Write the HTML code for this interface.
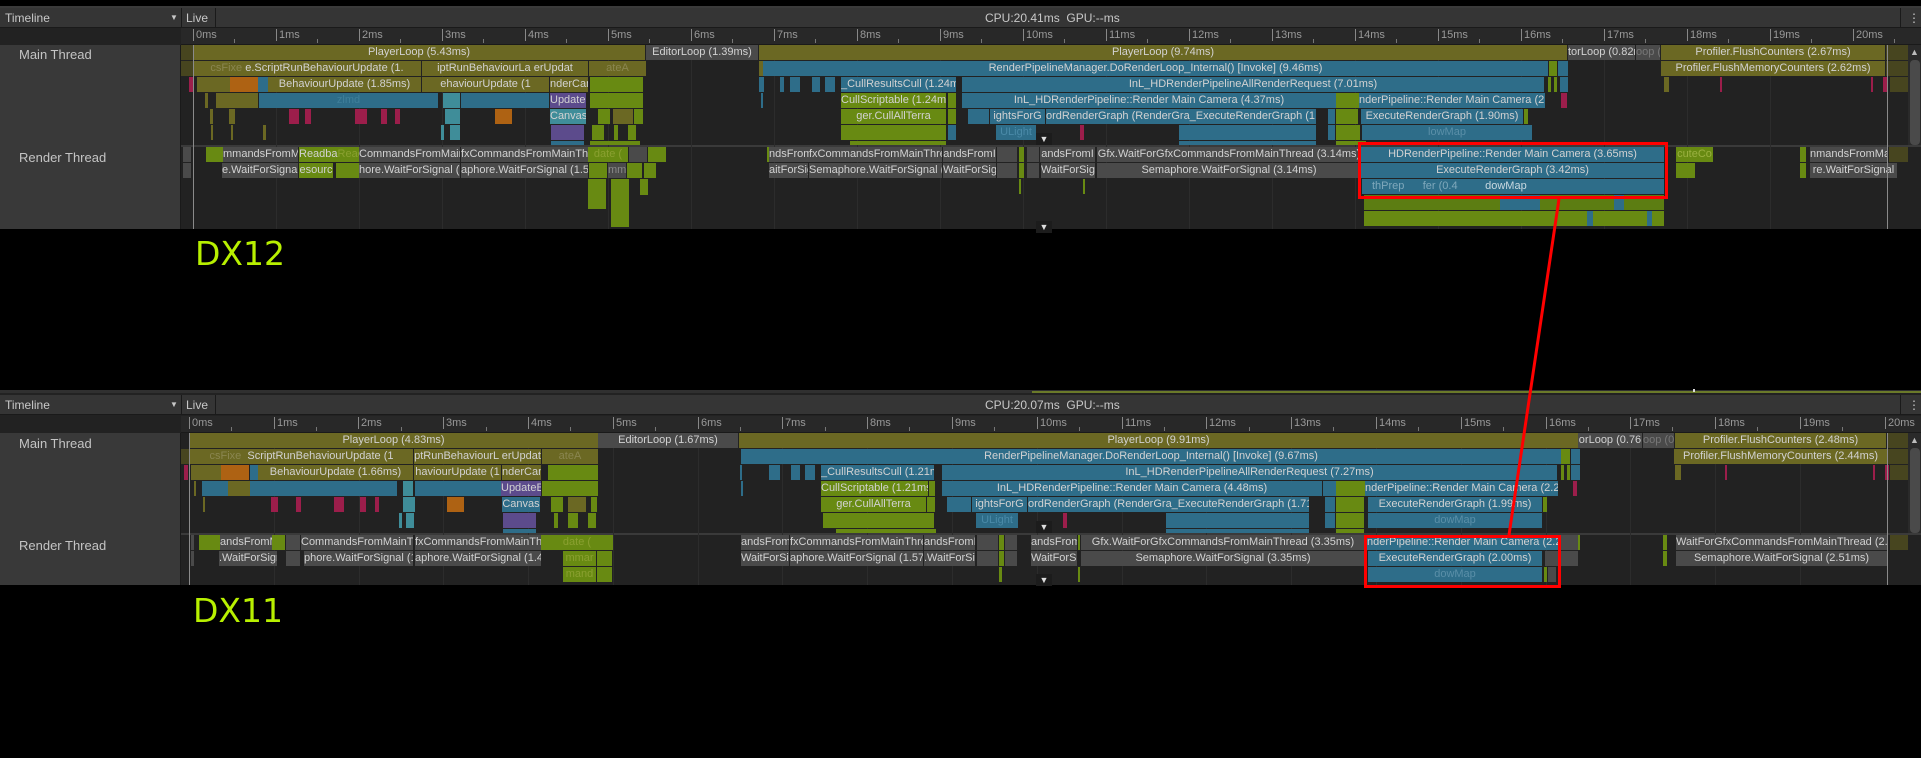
<!DOCTYPE html>
<html><head><meta charset="utf-8"><style>
*{margin:0;padding:0;box-sizing:border-box}
body{width:1921px;height:758px;background:#000;position:relative;overflow:hidden;font-family:"Liberation Sans",sans-serif}
.p{position:absolute;left:0;width:1921px;background:#222}
.tb{position:absolute;left:0;width:1921px;height:20px;background:#353535;border-bottom:1px solid #1a1a1a;color:#c8c8c8;font-size:12px;line-height:20px}
.lc{position:absolute;left:0;width:181px;background:#393939;border-right:1px solid #1a1a1a}
.ru{position:absolute;left:181px;right:0;height:17px;background:#282828;border-bottom:1px solid #1a1a1a}
.ru span{position:absolute;top:1px;font-size:11px;color:#999;border-left:1px solid #888;padding-left:2px;line-height:12px}
.ru em{position:absolute;top:11px;width:1px;height:4px;background:#777}
.lab{position:absolute;left:19px;font-size:13px;color:#c4c4c4}
.b{position:absolute;height:15px;overflow:hidden;white-space:nowrap;text-align:center;font-size:11px;line-height:15px;color:#d2d2d2;font-style:normal}
.o{background:#6b6823}.g{background:#4a4a4a}.bl{background:#2e6d89}.gr{background:#688a12}.or{background:#ae6213}.pu{background:#5c4b8c}.r{background:#9c1e4b}.d{background:#47451f}.t{background:#3f8d99}
.dm{color:#5a7f8f}
.gl{position:absolute;width:1px;background:#2c2c2c}
.sep{position:absolute;left:0;width:1921px;height:2px;background:#3a3a3a}
.fl{position:absolute;width:1px;background:#8a8a8a}
.dd{position:absolute;width:16px;height:12px;background:#1c1c1c;color:#ddd;font-size:9px;text-align:center;line-height:12px}
.dx{position:absolute;color:#b8f000;font-size:33px;font-family:"DejaVu Sans","Liberation Sans",sans-serif}
.sb{position:absolute;left:1908px;width:13px;background:#2a2a2a}
</style></head><body>

<!-- TOP PANEL -->
<div style="position:absolute;left:0;top:6px;width:1921px;height:2px;background:#3a3a3a"></div>
<div class="p" style="top:8px;height:221px"></div>
<div class="tb" style="top:8px"><span style="position:absolute;left:5px">Timeline</span><span style="position:absolute;left:170px;font-size:8px">▼</span><span style="position:absolute;left:181px;width:35px;height:20px;border-left:1px solid #1a1a1a;border-right:1px solid #1a1a1a;padding-left:4px">Live</span><span style="position:absolute;left:985px">CPU:20.41ms&nbsp;&nbsp;GPU:--ms</span><span style="position:absolute;left:1900px;border-left:1px solid #1a1a1a;padding-left:7px">⋮</span></div>
<div class="ru" style="top:28px">
<span style="left:12px">0ms</span><span style="left:95px">1ms</span><span style="left:178px">2ms</span><span style="left:261px">3ms</span><span style="left:344px">4ms</span><span style="left:427px">5ms</span><span style="left:510px">6ms</span><span style="left:593px">7ms</span><span style="left:676px">8ms</span><span style="left:759px">9ms</span><span style="left:842px">10ms</span><span style="left:925px">11ms</span><span style="left:1008px">12ms</span><span style="left:1091px">13ms</span><span style="left:1174px">14ms</span><span style="left:1257px">15ms</span><span style="left:1340px">16ms</span><span style="left:1423px">17ms</span><span style="left:1506px">18ms</span><span style="left:1589px">19ms</span><span style="left:1672px">20ms</span>
<em style="left:53px"></em><em style="left:136px"></em><em style="left:219px"></em><em style="left:302px"></em><em style="left:385px"></em><em style="left:468px"></em><em style="left:551px"></em><em style="left:634px"></em><em style="left:717px"></em><em style="left:800px"></em><em style="left:883px"></em><em style="left:966px"></em><em style="left:1049px"></em><em style="left:1132px"></em><em style="left:1215px"></em><em style="left:1298px"></em><em style="left:1381px"></em><em style="left:1464px"></em><em style="left:1547px"></em><em style="left:1630px"></em><em style="left:1713px"></em>
</div>
<div class="lc" style="top:45px;height:184px"></div>
<div class="lab" style="top:47px">Main Thread</div>
<div class="lab" style="top:150px">Render Thread</div>
<div class="sep" style="top:145px;left:181px;width:1740px"></div>
<!-- grid -->
<div class="gl" style="left:276px;top:45px;height:184px"></div><div class="gl" style="left:359px;top:45px;height:184px"></div><div class="gl" style="left:442px;top:45px;height:184px"></div><div class="gl" style="left:525px;top:45px;height:184px"></div><div class="gl" style="left:608px;top:45px;height:184px"></div><div class="gl" style="left:691px;top:45px;height:184px"></div><div class="gl" style="left:774px;top:45px;height:184px"></div><div class="gl" style="left:857px;top:45px;height:184px"></div><div class="gl" style="left:940px;top:45px;height:184px"></div><div class="gl" style="left:1023px;top:45px;height:184px"></div><div class="gl" style="left:1106px;top:45px;height:184px"></div><div class="gl" style="left:1189px;top:45px;height:184px"></div><div class="gl" style="left:1272px;top:45px;height:184px"></div><div class="gl" style="left:1355px;top:45px;height:184px"></div><div class="gl" style="left:1438px;top:45px;height:184px"></div><div class="gl" style="left:1521px;top:45px;height:184px"></div><div class="gl" style="left:1604px;top:45px;height:184px"></div><div class="gl" style="left:1687px;top:45px;height:184px"></div><div class="gl" style="left:1770px;top:45px;height:184px"></div>

<!-- main thread top -->
<i class="b d" style="left:181px;top:45px;width:12px"></i>
<i class="b o" style="left:193px;top:45px;width:452px">PlayerLoop (5.43ms)</i>
<i class="b g" style="left:646px;top:45px;width:112px">EditorLoop (1.39ms)</i>
<i class="b o" style="left:759px;top:45px;width:808px">PlayerLoop (9.74ms)</i>
<i class="b g" style="left:1568px;top:45px;width:67px">torLoop (0.82ms)</i>
<i class="b g" style="left:1636px;top:45px;width:24px;color:#777">oop (0</i>
<i class="b o" style="left:1661px;top:45px;width:224px">Profiler.FlushCounters (2.67ms)</i>
<i class="b d" style="left:1886px;top:45px;width:22px"></i>

<i class="b d" style="left:181px;top:61px;width:12px"></i>
<i class="b o" style="left:193px;top:61px;width:228px"><span style="color:#8a8650">csFixe </span>e.ScriptRunBehaviourUpdate (1.</i>
<i class="b o" style="left:422px;top:61px;width:166px">iptRunBehaviourLa erUpdat</i>
<i class="b o" style="left:589px;top:61px;width:57px;color:#8a8650">ateA</i>
<i class="b o" style="left:759px;top:61px;width:4px"></i>
<i class="b bl" style="left:763px;top:61px;width:785px">RenderPipelineManager.DoRenderLoop_Internal() [Invoke] (9.46ms)</i>
<i class="b gr" style="left:1549px;top:61px;width:8px"></i><i class="b bl" style="left:1558px;top:61px;width:10px"></i>
<i class="b o" style="left:1661px;top:61px;width:224px">Profiler.FlushMemoryCounters (2.62ms)</i>
<i class="b d" style="left:1886px;top:61px;width:22px"></i>

<i class="b r" style="left:189px;top:77px;width:4px"></i>
<i class="b o" style="left:197px;top:77px;width:33px"></i>
<i class="b or" style="left:230px;top:77px;width:28px"></i><i class="b bl" style="left:258px;top:77px;width:10px"></i>
<i class="b o" style="left:268px;top:77px;width:153px">BehaviourUpdate (1.85ms)</i>
<i class="b o" style="left:422px;top:77px;width:127px">ehaviourUpdate (1</i>
<i class="b o" style="left:550px;top:77px;width:38px">nderCan</i>
<i class="b gr" style="left:590px;top:77px;width:53px"></i>
<i class="b bl" style="left:759px;top:77px;width:5px"></i><i class="b bl" style="left:780px;top:77px;width:4px"></i><i class="b bl" style="left:790px;top:77px;width:10px"></i><i class="b bl" style="left:812px;top:77px;width:8px"></i><i class="b bl" style="left:825px;top:77px;width:10px"></i>
<i class="b bl" style="left:841px;top:77px;width:115px">_CullResultsCull (1.24ms)</i>
<i class="b bl" style="left:962px;top:77px;width:582px">InL_HDRenderPipelineAllRenderRequest (7.01ms)</i>
<i class="b gr" style="left:1548px;top:77px;width:3px"></i><i class="b gr" style="left:1554px;top:77px;width:3px"></i><i class="b bl" style="left:1560px;top:77px;width:8px"></i>
<i class="b o" style="left:1664px;top:77px;width:5px"></i><i class="b r" style="left:1720px;top:77px;width:2px"></i><i class="b r" style="left:1871px;top:77px;width:2px"></i><i class="b r" style="left:1883px;top:77px;width:4px"></i><i class="b d" style="left:1890px;top:77px;width:18px"></i>

<i class="b o" style="left:205px;top:93px;width:3px"></i><i class="b o" style="left:216px;top:93px;width:42px"></i>
<i class="b bl" style="left:259px;top:93px;width:179px;color:#3f7f9a">zlmd</i>
<i class="b t" style="left:443px;top:93px;width:17px"></i>
<i class="b bl" style="left:461px;top:93px;width:88px"></i>
<i class="b pu" style="left:550px;top:93px;width:36px">UpdateB</i>
<i class="b gr" style="left:590px;top:93px;width:53px"></i>
<i class="b bl" style="left:761px;top:93px;width:2px"></i>
<i class="b gr" style="left:841px;top:93px;width:105px">CullScriptable (1.24ms)</i><i class="b gr" style="left:948px;top:93px;width:8px"></i>
<i class="b bl" style="left:962px;top:93px;width:374px">InL_HDRenderPipeline::Render Main Camera (4.37ms)</i>
<i class="b gr" style="left:1336px;top:93px;width:23px"></i>
<i class="b bl" style="left:1359px;top:93px;width:186px">nderPipeline::Render Main Camera (2.2</i>
<i class="b r" style="left:1561px;top:93px;width:6px"></i>

<i class="b o" style="left:210px;top:109px;width:3px"></i><i class="b o" style="left:229px;top:109px;width:6px"></i><i class="b t" style="left:445px;top:109px;width:15px"></i>
<i class="b t" style="left:550px;top:109px;width:36px">Canvas</i><i class="b gr" style="left:598px;top:109px;width:12px"></i><i class="b o" style="left:613px;top:109px;width:20px"></i><i class="b gr" style="left:634px;top:109px;width:9px"></i>
<i class="b r" style="left:289px;top:109px;width:10px"></i><i class="b r" style="left:305px;top:109px;width:6px"></i><i class="b r" style="left:355px;top:109px;width:12px"></i><i class="b r" style="left:381px;top:109px;width:6px"></i><i class="b r" style="left:395px;top:109px;width:5px"></i><i class="b or" style="left:495px;top:109px;width:17px"></i>
<i class="b gr" style="left:841px;top:109px;width:105px">ger.CullAllTerra</i><i class="b gr" style="left:948px;top:109px;width:8px"></i>
<i class="b bl" style="left:968px;top:109px;width:21px"></i>
<i class="b bl" style="left:990px;top:109px;width:55px">ightsForG</i>
<i class="b bl" style="left:1046px;top:109px;width:270px">ordRenderGraph (RenderGra_ExecuteRenderGraph (1.66ms</i>
<i class="b bl" style="left:1328px;top:109px;width:7px"></i><i class="b gr" style="left:1336px;top:109px;width:22px"></i>
<i class="b bl" style="left:1361px;top:109px;width:162px">ExecuteRenderGraph (1.90ms)</i>
<i class="b gr" style="left:1524px;top:109px;width:4px"></i>

<i class="b o" style="left:211px;top:125px;width:2px"></i><i class="b o" style="left:231px;top:125px;width:2px"></i><i class="b o" style="left:263px;top:125px;width:3px"></i><i class="b t" style="left:441px;top:125px;width:3px"></i><i class="b t" style="left:450px;top:125px;width:10px"></i>
<i class="b pu" style="left:551px;top:125px;width:33px"></i><i class="b gr" style="left:592px;top:125px;width:12px"></i><i class="b gr" style="left:614px;top:125px;width:4px"></i><i class="b gr" style="left:628px;top:125px;width:8px"></i>
<i class="b gr" style="left:841px;top:125px;width:105px"></i><i class="b bl" style="left:948px;top:125px;width:8px"></i>
<i class="b bl" style="left:996px;top:125px;width:40px;color:#4a8aa8">ULight</i>
<i class="b r" style="left:1080px;top:125px;width:4px"></i>
<i class="b bl" style="left:1179px;top:125px;width:137px"></i>
<i class="b bl" style="left:1328px;top:125px;width:7px"></i><i class="b gr" style="left:1336px;top:125px;width:24px"></i>
<i class="b bl" style="left:1362px;top:125px;width:170px;color:#5a8fa8">lowMap</i>
<i class="b bl" style="left:551px;top:141px;width:33px;height:4px"></i><i class="b gr" style="left:590px;top:141px;width:50px;height:4px"></i><i class="b gr" style="left:850px;top:141px;width:96px;height:4px"></i><i class="b bl" style="left:1179px;top:141px;width:137px;height:4px"></i><i class="b gr" style="left:1336px;top:141px;width:30px;height:4px"></i>
<div class="dd" style="left:1036px;top:133px">▼</div>

<div class="sb" style="top:45px;height:100px"></div>
<div style="position:absolute;left:1910px;top:47px;color:#bbb;font-size:9px">▲</div>
<div style="position:absolute;left:1910px;top:60px;width:10px;height:85px;background:#4a4a4a;border-radius:4px"></div>

<!-- render thread top -->
<i class="b g" style="left:183px;top:147px;width:8px"></i><i class="b gr" style="left:206px;top:147px;width:17px"></i>
<i class="b g" style="left:223px;top:147px;width:75px">mmandsFromMa</i>
<i class="b gr" style="left:299px;top:147px;width:60px">Readba<span style="color:#8aa030">Read</span></i>
<i class="b g" style="left:359px;top:147px;width:101px">CommandsFromMain</i>
<i class="b g" style="left:461px;top:147px;width:127px">fxCommandsFromMainThr</i>
<i class="b gr" style="left:588px;top:147px;width:40px;color:#8aa030">date (</i><i class="b g" style="left:629px;top:147px;width:18px"></i><i class="b gr" style="left:648px;top:147px;width:18px"></i>
<i class="b gr" style="left:767px;top:147px;width:2px"></i>
<i class="b g" style="left:769px;top:147px;width:40px">ndsFrom</i>
<i class="b g" style="left:809px;top:147px;width:133px">fxCommandsFromMainThread</i>
<i class="b g" style="left:943px;top:147px;width:53px">andsFromI</i>
<i class="b g" style="left:997px;top:147px;width:20px"></i><i class="b gr" style="left:1019px;top:147px;width:5px"></i><i class="b g" style="left:1027px;top:147px;width:12px"></i>
<i class="b g" style="left:1040px;top:147px;width:55px">andsFromI</i>
<i class="b g" style="left:1097px;top:147px;width:264px">Gfx.WaitForGfxCommandsFromMainThread (3.14ms)</i>
<i class="b bl" style="left:1361px;top:147px;width:303px">HDRenderPipeline::Render Main Camera (3.65ms)</i>
<i class="b gr" style="left:1676px;top:147px;width:37px;color:#9ab040">cuteCo</i>
<i class="b gr" style="left:1800px;top:147px;width:6px"></i>
<i class="b g" style="left:1810px;top:147px;width:78px">nmandsFromMa</i>
<i class="b d" style="left:1889px;top:147px;width:19px"></i>

<i class="b g" style="left:183px;top:163px;width:8px"></i>
<i class="b g" style="left:222px;top:163px;width:76px">e.WaitForSignal</i>
<i class="b gr" style="left:299px;top:163px;width:34px">esourc</i><i class="b gr" style="left:336px;top:163px;width:23px"></i>
<i class="b g" style="left:359px;top:163px;width:101px">hore.WaitForSignal (1</i>
<i class="b g" style="left:461px;top:163px;width:127px">aphore.WaitForSignal (1.53</i>
<i class="b gr" style="left:589px;top:163px;width:18px"></i><i class="b g" style="left:608px;top:163px;width:18px;color:#888">mma</i><i class="b gr" style="left:627px;top:163px;width:15px"></i><i class="b gr" style="left:644px;top:163px;width:12px"></i>
<i class="b g" style="left:769px;top:163px;width:39px">aitForSig</i>
<i class="b g" style="left:809px;top:163px;width:133px">Semaphore.WaitForSignal (1.57</i>
<i class="b g" style="left:943px;top:163px;width:53px">WaitForSig</i>
<i class="b g" style="left:997px;top:163px;width:20px"></i><i class="b gr" style="left:1019px;top:163px;width:5px"></i><i class="b g" style="left:1027px;top:163px;width:12px"></i>
<i class="b g" style="left:1041px;top:163px;width:54px">WaitForSig</i>
<i class="b g" style="left:1097px;top:163px;width:264px">Semaphore.WaitForSignal (3.14ms)</i>
<i class="b bl" style="left:1361px;top:163px;width:303px">ExecuteRenderGraph (3.42ms)</i>
<i class="b gr" style="left:1676px;top:163px;width:19px"></i><i class="b gr" style="left:1800px;top:163px;width:6px"></i>
<i class="b g" style="left:1810px;top:163px;width:87px">re.WaitForSignal</i>

<i class="b gr" style="left:1019px;top:179px;width:2px"></i><i class="b gr" style="left:1083px;top:179px;width:2px"></i>
<i class="b bl" style="left:1362px;top:179px;width:302px;color:#7fa8bb;text-align:left;padding-left:10px">thPrep&nbsp;&nbsp;&nbsp;&nbsp;&nbsp;&nbsp;fer (0.4&nbsp;&nbsp;&nbsp;&nbsp;&nbsp;&nbsp;&nbsp;&nbsp;&nbsp;<span style="color:#c8d8e0">dowMap</span></i>
<i class="b gr" style="left:588px;top:179px;width:18px;height:30px"></i><i class="b gr" style="left:611px;top:179px;width:18px;height:48px"></i><i class="b gr" style="left:640px;top:179px;width:8px;height:16px"></i>
<i class="b gr" style="left:1364px;top:195px;width:300px;height:15px;background:#5c7d12"></i>
<i class="b bl" style="left:1500px;top:195px;width:40px"></i><i class="b bl" style="left:1614px;top:195px;width:10px"></i>
<i class="b gr" style="left:1364px;top:211px;width:300px;height:15px"></i>
<i class="b bl" style="left:1587px;top:211px;width:6px"></i><i class="b bl" style="left:1647px;top:211px;width:5px"></i>
<div class="dd" style="left:1036px;top:221px">▼</div>

<div class="fl" style="left:193px;top:45px;height:184px"></div>
<div class="fl" style="left:1887px;top:45px;height:184px"></div>

<!-- labels -->
<div class="dx" style="left:195px;top:234px">DX12</div>
<div class="dx" style="left:193px;top:591px">DX11</div>

<!-- BOTTOM PANEL -->
<div style="position:absolute;left:0;top:390px;width:1921px;height:3px;background:#303030"></div>
<div style="position:absolute;left:1032px;top:391px;width:889px;height:2px;background:#6b7a2a"></div>
<div style="position:absolute;left:1693px;top:389px;width:2px;height:3px;background:#ddd"></div>
<div class="p" style="top:393px;height:192px"></div>
<div class="tb" style="top:395px"><span style="position:absolute;left:5px">Timeline</span><span style="position:absolute;left:170px;font-size:8px">▼</span><span style="position:absolute;left:181px;width:35px;height:20px;border-left:1px solid #1a1a1a;border-right:1px solid #1a1a1a;padding-left:4px">Live</span><span style="position:absolute;left:985px">CPU:20.07ms&nbsp;&nbsp;GPU:--ms</span><span style="position:absolute;left:1900px;border-left:1px solid #1a1a1a;padding-left:7px">⋮</span></div>
<div class="ru" style="top:416px">
<span style="left:8px">0ms</span><span style="left:93px">1ms</span><span style="left:177px">2ms</span><span style="left:262px">3ms</span><span style="left:347px">4ms</span><span style="left:432px">5ms</span><span style="left:517px">6ms</span><span style="left:601px">7ms</span><span style="left:686px">8ms</span><span style="left:771px">9ms</span><span style="left:856px">10ms</span><span style="left:941px">11ms</span><span style="left:1025px">12ms</span><span style="left:1110px">13ms</span><span style="left:1195px">14ms</span><span style="left:1280px">15ms</span><span style="left:1365px">16ms</span><span style="left:1449px">17ms</span><span style="left:1534px">18ms</span><span style="left:1619px">19ms</span><span style="left:1704px">20ms</span>
<em style="left:50px"></em><em style="left:135px"></em><em style="left:220px"></em><em style="left:305px"></em><em style="left:389px"></em><em style="left:474px"></em><em style="left:559px"></em><em style="left:644px"></em><em style="left:728px"></em><em style="left:813px"></em><em style="left:898px"></em><em style="left:983px"></em><em style="left:1068px"></em><em style="left:1152px"></em><em style="left:1237px"></em><em style="left:1322px"></em><em style="left:1407px"></em><em style="left:1491px"></em><em style="left:1576px"></em><em style="left:1661px"></em>
</div>
<div class="lc" style="top:433px;height:152px"></div>
<div class="lab" style="top:436px">Main Thread</div>
<div class="lab" style="top:538px">Render Thread</div>
<div class="sep" style="top:533px;left:181px;width:1740px"></div>
<div class="gl" style="left:274px;top:433px;height:152px"></div><div class="gl" style="left:359px;top:433px;height:152px"></div><div class="gl" style="left:443px;top:433px;height:152px"></div><div class="gl" style="left:528px;top:433px;height:152px"></div><div class="gl" style="left:613px;top:433px;height:152px"></div><div class="gl" style="left:698px;top:433px;height:152px"></div><div class="gl" style="left:782px;top:433px;height:152px"></div><div class="gl" style="left:867px;top:433px;height:152px"></div><div class="gl" style="left:952px;top:433px;height:152px"></div><div class="gl" style="left:1037px;top:433px;height:152px"></div><div class="gl" style="left:1122px;top:433px;height:152px"></div><div class="gl" style="left:1206px;top:433px;height:152px"></div><div class="gl" style="left:1291px;top:433px;height:152px"></div><div class="gl" style="left:1376px;top:433px;height:152px"></div><div class="gl" style="left:1461px;top:433px;height:152px"></div><div class="gl" style="left:1546px;top:433px;height:152px"></div><div class="gl" style="left:1630px;top:433px;height:152px"></div><div class="gl" style="left:1715px;top:433px;height:152px"></div><div class="gl" style="left:1800px;top:433px;height:152px"></div>

<i class="b o" style="left:189px;top:433px;width:409px">PlayerLoop (4.83ms)</i>
<i class="b g" style="left:598px;top:433px;width:140px">EditorLoop (1.67ms)</i>
<i class="b o" style="left:739px;top:433px;width:839px">PlayerLoop (9.91ms)</i>
<i class="b g" style="left:1578px;top:433px;width:64px">orLoop (0.76</i>
<i class="b g" style="left:1643px;top:433px;width:31px;color:#777">oop (0</i>
<i class="b o" style="left:1675px;top:433px;width:211px">Profiler.FlushCounters (2.48ms)</i>
<i class="b d" style="left:1887px;top:433px;width:21px"></i>

<i class="b d" style="left:181px;top:449px;width:8px"></i>
<i class="b o" style="left:190px;top:449px;width:223px"><span style="color:#8a8650">csFixe&nbsp;&nbsp;</span>ScriptRunBehaviourUpdate (1</i>
<i class="b o" style="left:414px;top:449px;width:127px">ptRunBehaviourL erUpdat</i>
<i class="b o" style="left:542px;top:449px;width:56px;color:#8a8650">ateA</i>
<i class="b bl" style="left:741px;top:449px;width:820px">RenderPipelineManager.DoRenderLoop_Internal() [Invoke] (9.67ms)</i>
<i class="b gr" style="left:1561px;top:449px;width:9px"></i><i class="b bl" style="left:1571px;top:449px;width:9px"></i>
<i class="b o" style="left:1674px;top:449px;width:213px">Profiler.FlushMemoryCounters (2.44ms)</i>
<i class="b d" style="left:1887px;top:449px;width:21px"></i>

<i class="b r" style="left:184px;top:465px;width:4px"></i><i class="b o" style="left:191px;top:465px;width:30px"></i>
<i class="b or" style="left:221px;top:465px;width:28px"></i><i class="b bl" style="left:250px;top:465px;width:8px"></i>
<i class="b o" style="left:258px;top:465px;width:155px">BehaviourUpdate (1.66ms)</i>
<i class="b o" style="left:414px;top:465px;width:87px">haviourUpdate (1</i>
<i class="b o" style="left:502px;top:465px;width:39px">nderCan</i>
<i class="b gr" style="left:548px;top:465px;width:50px"></i>
<i class="b bl" style="left:740px;top:465px;width:2px"></i><i class="b bl" style="left:769px;top:465px;width:11px"></i><i class="b bl" style="left:791px;top:465px;width:9px"></i><i class="b bl" style="left:805px;top:465px;width:10px"></i>
<i class="b bl" style="left:821px;top:465px;width:113px">_CullResultsCull (1.21ms</i>
<i class="b bl" style="left:942px;top:465px;width:615px">InL_HDRenderPipelineAllRenderRequest (7.27ms)</i>
<i class="b gr" style="left:1561px;top:465px;width:3px"></i><i class="b gr" style="left:1567px;top:465px;width:3px"></i><i class="b bl" style="left:1571px;top:465px;width:9px"></i>
<i class="b o" style="left:1675px;top:465px;width:6px"></i><i class="b r" style="left:1725px;top:465px;width:2px"></i><i class="b r" style="left:1873px;top:465px;width:2px"></i><i class="b r" style="left:1885px;top:465px;width:4px"></i><i class="b d" style="left:1890px;top:465px;width:18px"></i>

<i class="b o" style="left:194px;top:481px;width:2px"></i><i class="b bl" style="left:202px;top:481px;width:10px"></i>
<i class="b bl" style="left:212px;top:481px;width:185px"></i><i class="b o" style="left:228px;top:481px;width:22px"></i>
<i class="b t" style="left:403px;top:481px;width:10px"></i>
<i class="b bl" style="left:415px;top:481px;width:86px"></i>
<i class="b pu" style="left:501px;top:481px;width:40px">UpdateB</i>
<i class="b gr" style="left:542px;top:481px;width:56px"></i>
<i class="b bl" style="left:741px;top:481px;width:2px"></i>
<i class="b gr" style="left:821px;top:481px;width:107px">CullScriptable (1.21ms</i><i class="b gr" style="left:929px;top:481px;width:6px"></i>
<i class="b bl" style="left:942px;top:481px;width:380px">InL_HDRenderPipeline::Render Main Camera (4.48ms)</i>
<i class="b bl" style="left:1323px;top:481px;width:13px"></i><i class="b gr" style="left:1336px;top:481px;width:29px"></i>
<i class="b bl" style="left:1365px;top:481px;width:193px">nderPipeline::Render Main Camera (2.28</i>
<i class="b r" style="left:1573px;top:481px;width:4px"></i>

<i class="b o" style="left:203px;top:497px;width:2px"></i><i class="b r" style="left:271px;top:497px;width:7px"></i><i class="b r" style="left:296px;top:497px;width:5px"></i><i class="b r" style="left:334px;top:497px;width:10px"></i><i class="b r" style="left:360px;top:497px;width:6px"></i><i class="b r" style="left:375px;top:497px;width:4px"></i><i class="b t" style="left:403px;top:497px;width:12px"></i><i class="b or" style="left:447px;top:497px;width:17px"></i>
<i class="b bl" style="left:502px;top:497px;width:38px">Canvas</i><i class="b gr" style="left:551px;top:497px;width:12px"></i><i class="b o" style="left:568px;top:497px;width:18px"></i><i class="b gr" style="left:591px;top:497px;width:6px"></i>
<i class="b gr" style="left:821px;top:497px;width:105px">ger.CullAllTerra</i><i class="b gr" style="left:927px;top:497px;width:8px"></i>
<i class="b bl" style="left:947px;top:497px;width:24px"></i>
<i class="b bl" style="left:972px;top:497px;width:55px">ightsForG</i>
<i class="b bl" style="left:1028px;top:497px;width:281px">ordRenderGraph (RenderGra_ExecuteRenderGraph (1.71ms</i>
<i class="b bl" style="left:1325px;top:497px;width:10px"></i><i class="b gr" style="left:1336px;top:497px;width:28px"></i>
<i class="b bl" style="left:1368px;top:497px;width:174px">ExecuteRenderGraph (1.99ms)</i><i class="b gr" style="left:1543px;top:497px;width:4px"></i>

<i class="b t" style="left:399px;top:513px;width:3px"></i><i class="b t" style="left:406px;top:513px;width:8px"></i>
<i class="b pu" style="left:503px;top:513px;width:33px"></i><i class="b gr" style="left:554px;top:513px;width:4px"></i><i class="b gr" style="left:568px;top:513px;width:10px"></i><i class="b gr" style="left:588px;top:513px;width:8px"></i>
<i class="b gr" style="left:823px;top:513px;width:111px"></i>
<i class="b bl" style="left:976px;top:513px;width:42px;color:#4a8aa8">ULight</i>
<i class="b r" style="left:1063px;top:513px;width:4px"></i>
<i class="b bl" style="left:1166px;top:513px;width:143px"></i>
<i class="b bl" style="left:1325px;top:513px;width:10px"></i><i class="b gr" style="left:1336px;top:513px;width:28px"></i>
<i class="b bl" style="left:1368px;top:513px;width:174px;color:#5a8fa8">dowMap</i>
<i class="b bl" style="left:503px;top:529px;width:33px;height:4px"></i><i class="b gr" style="left:836px;top:529px;width:100px;height:4px"></i><i class="b bl" style="left:1166px;top:529px;width:143px;height:4px"></i><i class="b gr" style="left:1336px;top:529px;width:28px;height:4px"></i>
<div class="dd" style="left:1036px;top:521px">▼</div>

<div class="sb" style="top:433px;height:100px"></div>
<div style="position:absolute;left:1910px;top:435px;color:#bbb;font-size:9px">▲</div>
<div style="position:absolute;left:1910px;top:448px;width:10px;height:85px;background:#4a4a4a;border-radius:4px"></div>

<i class="b g" style="left:191px;top:535px;width:3px"></i><i class="b gr" style="left:199px;top:535px;width:21px"></i>
<i class="b g" style="left:220px;top:535px;width:52px">andsFromM</i>
<i class="b gr" style="left:272px;top:535px;width:13px"></i><i class="b g" style="left:286px;top:535px;width:14px"></i>
<i class="b g" style="left:301px;top:535px;width:112px">CommandsFromMainT</i>
<i class="b g" style="left:415px;top:535px;width:126px">fxCommandsFromMainThr</i>
<i class="b gr" style="left:541px;top:535px;width:72px;color:#8aa030">date (</i>
<i class="b g" style="left:741px;top:535px;width:48px">andsFrom</i>
<i class="b g" style="left:790px;top:535px;width:133px">fxCommandsFromMainThre</i>
<i class="b g" style="left:924px;top:535px;width:51px">andsFromI</i>
<i class="b g" style="left:977px;top:535px;width:21px"></i><i class="b gr" style="left:999px;top:535px;width:5px"></i><i class="b g" style="left:1005px;top:535px;width:12px"></i>
<i class="b g" style="left:1031px;top:535px;width:46px">andsFrom</i>
<i class="b gr" style="left:1078px;top:535px;width:2px"></i>
<i class="b g" style="left:1081px;top:535px;width:284px">Gfx.WaitForGfxCommandsFromMainThread (3.35ms)</i>
<i class="b bl" style="left:1367px;top:535px;width:191px">nderPipeline::Render Main Camera (2.2</i>
<i class="b g" style="left:1558px;top:535px;width:20px"></i><i class="b gr" style="left:1578px;top:535px;width:2px"></i><i class="b gr" style="left:1663px;top:535px;width:4px"></i>
<i class="b g" style="left:1676px;top:535px;width:211px">WaitForGfxCommandsFromMainThread (2.51</i>
<i class="b d" style="left:1890px;top:535px;width:18px"></i>

<i class="b g" style="left:191px;top:551px;width:3px"></i>
<i class="b g" style="left:219px;top:551px;width:58px">.WaitForSign</i>
<i class="b g" style="left:286px;top:551px;width:14px"></i>
<i class="b g" style="left:304px;top:551px;width:109px">phore.WaitForSignal (1.</i>
<i class="b g" style="left:415px;top:551px;width:126px">aphore.WaitForSignal (1.48</i>
<i class="b gr" style="left:563px;top:551px;width:33px;color:#8aa030">mmar</i><i class="b gr" style="left:597px;top:551px;width:15px"></i>
<i class="b g" style="left:741px;top:551px;width:48px">WaitForSig</i>
<i class="b g" style="left:790px;top:551px;width:133px">aphore.WaitForSignal (1.57</i>
<i class="b g" style="left:924px;top:551px;width:51px">.WaitForSig</i>
<i class="b g" style="left:977px;top:551px;width:21px"></i><i class="b gr" style="left:999px;top:551px;width:5px"></i><i class="b g" style="left:1005px;top:551px;width:12px"></i>
<i class="b g" style="left:1031px;top:551px;width:46px">WaitForSig</i>
<i class="b g" style="left:1081px;top:551px;width:284px">Semaphore.WaitForSignal (3.35ms)</i>
<i class="b bl" style="left:1368px;top:551px;width:174px">ExecuteRenderGraph (2.00ms)</i>
<i class="b g" style="left:1545px;top:551px;width:13px"></i><i class="b g" style="left:1560px;top:551px;width:18px"></i><i class="b gr" style="left:1663px;top:551px;width:4px"></i>
<i class="b g" style="left:1676px;top:551px;width:211px">Semaphore.WaitForSignal (2.51ms)</i>
<i class="b gr" style="left:563px;top:567px;width:33px;color:#8aa030">mand</i><i class="b gr" style="left:597px;top:567px;width:15px"></i>
<i class="b gr" style="left:999px;top:567px;width:3px"></i><i class="b gr" style="left:1078px;top:567px;width:2px"></i>
<i class="b bl" style="left:1368px;top:567px;width:174px;color:#5a8fa8">dowMap</i><i class="b gr" style="left:1544px;top:567px;width:3px"></i><i class="b g" style="left:1548px;top:567px;width:8px"></i>
<div class="dd" style="left:1036px;top:574px">▼</div>

<div class="fl" style="left:189px;top:433px;height:152px"></div>
<div class="fl" style="left:1887px;top:433px;height:152px"></div>

<!-- annotations -->
<div style="position:absolute;left:1358px;top:142px;width:310px;height:57px;border:3px solid #ff0000"></div>
<div style="position:absolute;left:1364px;top:535px;width:197px;height:53px;border:3px solid #ff0000"></div>
<svg style="position:absolute;left:0;top:0" width="1921" height="758"><line x1="1559" y1="199" x2="1509" y2="535" stroke="#ff0000" stroke-width="3"/></svg>
</body></html>
